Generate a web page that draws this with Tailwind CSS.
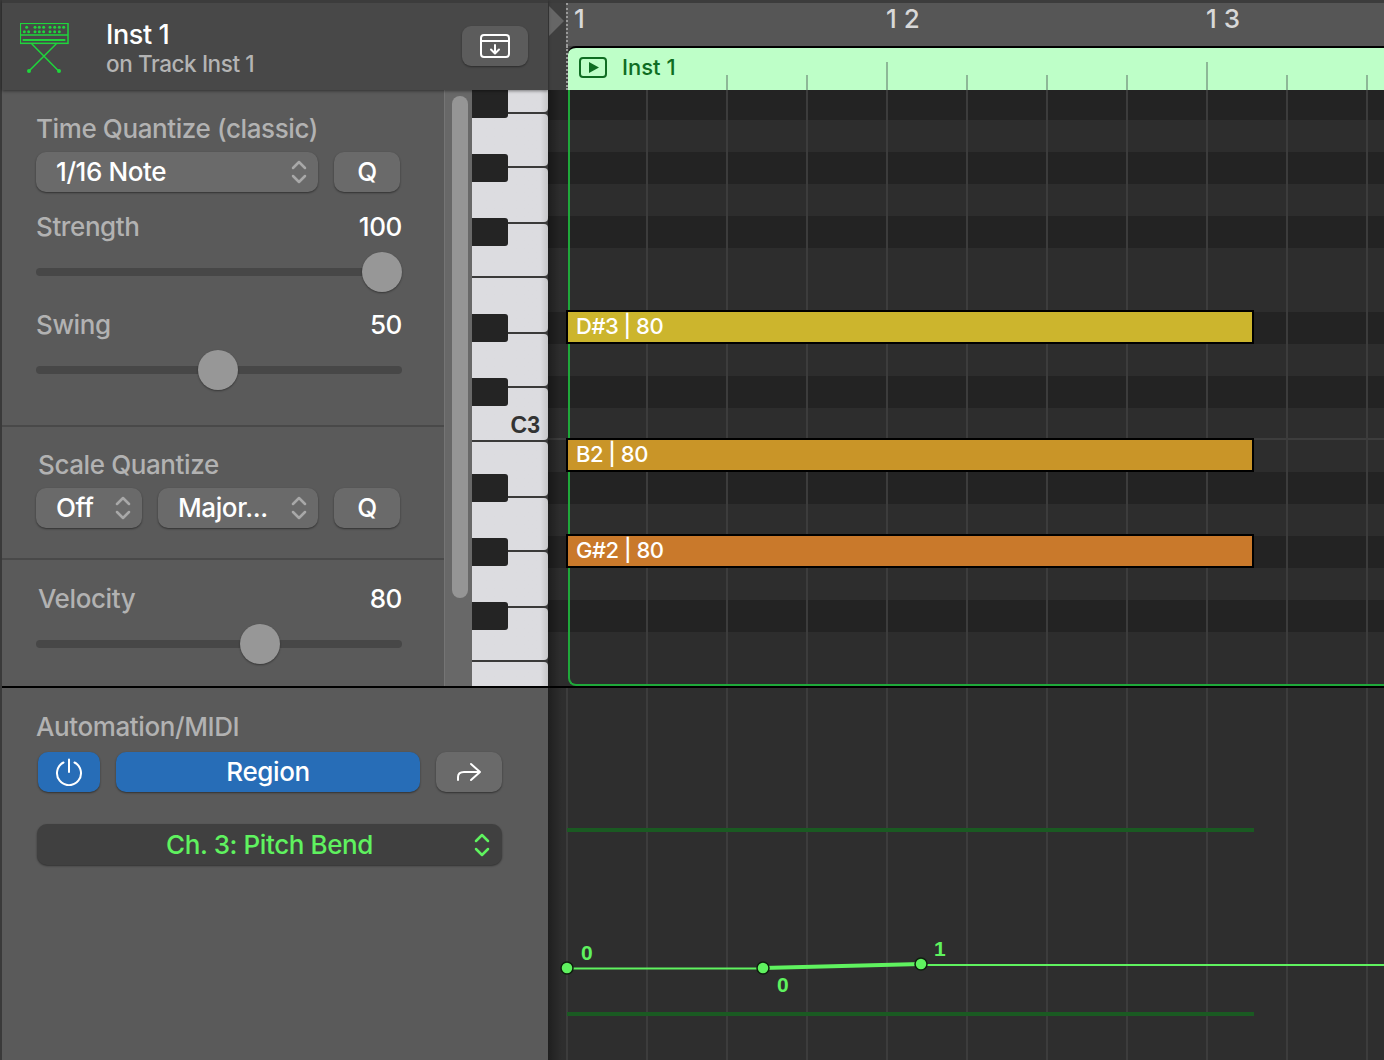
<!DOCTYPE html>
<html lang="en">
<head>
    <meta charset="UTF-8">
    <title>Piano Roll</title>
    <script src="https://cdn.jsdelivr.net/npm/@tailwindcss/browser@4"></script>
</head>
<body class="bg-[#2e2e2e]">
<div class="flex w-[1384px] h-[1060px] overflow-hidden font-['Inter','Noto_Sans',sans-serif] font-medium text-[26px] leading-[28px] tracking-[-0.4px] text-white">

    <!-- left column -->
    <div class="flex flex-col w-[548px] shrink-0 border-l-2 border-[#3a3a3a]">
        <!-- header -->
        <div class="flex items-center h-[90px] pt-[3px] pl-[18px] pr-[20px] bg-[#484848] border-t-[3px] border-[#3c3c3c] shadow-[0_1px_3px_#0007] relative z-20">
            <svg class="w-[50px] h-[50px] shrink-0" viewBox="60 72 150 150" fill="none" stroke="#1fd53c" stroke-width="4.5">
                <rect x="61" y="73" width="143" height="60"/>
                <path d="M61 108H204"/>
                <path d="M68 123H196" stroke-width="6"/>
                <path d="M95 134L176 216M169 134L87 216"/>
                <g fill="#1fd53c" stroke="none">
                    <circle cx="80" cy="85" r="4.5"/><circle cx="105" cy="85" r="4.5"/><circle cx="118" cy="85" r="4.5"/><circle cx="131" cy="85" r="4.5"/><circle cx="150" cy="85" r="4.5"/><circle cx="164" cy="85" r="4.5"/><circle cx="178" cy="85" r="4.5"/><circle cx="191" cy="85" r="4.5"/>
                    <circle cx="73" cy="98" r="4.5"/><circle cx="86" cy="98" r="4.5"/><circle cx="105" cy="98" r="4.5"/><circle cx="118" cy="98" r="4.5"/><circle cx="131" cy="98" r="4.5"/><circle cx="150" cy="98" r="4.5"/><circle cx="164" cy="98" r="4.5"/><circle cx="178" cy="98" r="4.5"/>
                    <circle cx="87" cy="216" r="6"/><circle cx="177" cy="216" r="6"/>
                </g>
            </svg>
            <div class="ml-[36px] flex flex-col flex-1 mt-[1px]">
                <span class="text-[27px] leading-[30px]">Inst 1</span>
                <span class="text-[#b4b4b4] text-[22.5px] leading-[28px]">on Track Inst 1</span>
            </div>
            <button class="flex items-center justify-center w-[66px] h-[40px] -mt-[4px] rounded-[9px] bg-[#5c5c5c] shadow-[0_1px_2px_#0006]">
                <svg class="w-[32px] h-[26px]" viewBox="0 0 32 26" fill="none" stroke="#fff" stroke-width="2" stroke-linecap="round" stroke-linejoin="round">
                    <rect x="2" y="2" width="28" height="22" rx="3"/>
                    <path d="M2 8H30M16 12V20M12 16.5L16 20.5L20 16.5"/>
                </svg>
            </button>
        </div>

        <!-- inspector + scrollbar + piano -->
        <div class="flex h-[596px] shrink-0">
            <div class="flex flex-col w-[442px] bg-[#5a5a5a] text-[#b2b2b2]">
                <section class="h-[337px] shrink-0 pt-[25px] pl-[34px] pr-[40px] border-b-2 border-[#494949]">
                    <div class="h-[28px]">Time Quantize (classic)</div>
                    <div class="flex gap-[16px] mt-[9px]">
                        <div class="flex items-center justify-between w-[282px] h-[40px] pl-[20px] pr-[11px] rounded-[10px] bg-[#6a6a6a] text-white shadow-[0_1px_2px_#0007]">
                            1/16 Note
                            <svg class="w-[16px] h-[26px]" viewBox="0 0 16 26" fill="none" stroke="#a8a8a8" stroke-width="2.5" stroke-linecap="round" stroke-linejoin="round"><path d="M2 9L8 3L14 9M2 17L8 23L14 17"/></svg>
                        </div>
                        <div class="flex items-center justify-center w-[66px] h-[40px] rounded-[10px] bg-[#6a6a6a] text-white shadow-[0_1px_2px_#0007]">Q</div>
                    </div>
                    <div class="flex justify-between h-[28px] mt-[21px] w-[366px]">Strength<span class="text-white">100</span></div>
                    <div class="relative flex items-center h-[40px] w-[366px] mt-[11px]">
                        <div class="w-full h-[8px] rounded-full bg-[#474747]"></div>
                        <div class="absolute left-[326px] w-[40px] h-[40px] rounded-full bg-[#979797] shadow-[0_1px_2px_#0006]"></div>
                    </div>
                    <div class="flex justify-between h-[28px] mt-[19px] w-[366px]">Swing<span class="text-white">50</span></div>
                    <div class="relative flex items-center h-[40px] w-[366px] mt-[11px]">
                        <div class="w-full h-[8px] rounded-full bg-[#474747]"></div>
                        <div class="absolute left-[162px] w-[40px] h-[40px] rounded-full bg-[#979797] shadow-[0_1px_2px_#0006]"></div>
                    </div>
                </section>
                <section class="h-[133px] shrink-0 pt-[24px] pl-[34px] pr-[40px] border-b-2 border-[#494949]">
                    <div class="h-[28px] pl-[2px]">Scale Quantize</div>
                    <div class="flex gap-[16px] mt-[9px]">
                        <div class="flex items-center justify-between w-[106px] h-[40px] pl-[20px] pr-[11px] rounded-[10px] bg-[#6a6a6a] text-white shadow-[0_1px_2px_#0007]">
                            Off
                            <svg class="w-[16px] h-[26px]" viewBox="0 0 16 26" fill="none" stroke="#a8a8a8" stroke-width="2.5" stroke-linecap="round" stroke-linejoin="round"><path d="M2 9L8 3L14 9M2 17L8 23L14 17"/></svg>
                        </div>
                        <div class="flex items-center justify-between w-[160px] h-[40px] pl-[20px] pr-[11px] rounded-[10px] bg-[#6a6a6a] text-white shadow-[0_1px_2px_#0007]">
                            Major...
                            <svg class="w-[16px] h-[26px]" viewBox="0 0 16 26" fill="none" stroke="#a8a8a8" stroke-width="2.5" stroke-linecap="round" stroke-linejoin="round"><path d="M2 9L8 3L14 9M2 17L8 23L14 17"/></svg>
                        </div>
                        <div class="flex items-center justify-center w-[66px] h-[40px] rounded-[10px] bg-[#6a6a6a] text-white shadow-[0_1px_2px_#0007]">Q</div>
                    </div>
                </section>
                <section class="flex-1 pt-[25px] pl-[34px] pr-[40px]">
                    <div class="flex justify-between h-[28px] pl-[2px] w-[366px]">Velocity<span class="text-white">80</span></div>
                    <div class="relative flex items-center h-[40px] w-[366px] mt-[11px]">
                        <div class="w-full h-[8px] rounded-full bg-[#474747]"></div>
                        <div class="absolute left-[204px] w-[40px] h-[40px] rounded-full bg-[#979797] shadow-[0_1px_2px_#0006]"></div>
                    </div>
                </section>
            </div>

            <!-- scrollbar -->
            <div class="w-[28px] pl-[7px] pt-[6px] bg-[#686868] border-l border-[#757575]">
                <div class="w-[16px] h-[502px] rounded-full bg-[#959595]"></div>
            </div>

            <!-- piano -->
            <div class="relative flex flex-col gap-[2px] w-[76px] bg-[#3a3a3a] overflow-hidden">
                <div class="h-[22px] shrink-0 bg-linear-to-r from-[#dcdce0] from-90% to-[#c6c6c8] rounded-br-[4px]"></div>
                <div class="h-[52px] shrink-0 bg-linear-to-r from-[#dcdce0] from-90% to-[#c6c6c8] rounded-r-[4px]"></div>
                <div class="h-[54px] shrink-0 bg-linear-to-r from-[#dcdce0] from-90% to-[#c6c6c8] rounded-r-[4px]"></div>
                <div class="h-[52px] shrink-0 bg-linear-to-r from-[#dcdce0] from-90% to-[#c6c6c8] rounded-r-[4px]"></div>
                <div class="h-[54px] shrink-0 bg-linear-to-r from-[#dcdce0] from-90% to-[#c6c6c8] rounded-r-[4px]"></div>
                <div class="h-[52px] shrink-0 bg-linear-to-r from-[#dcdce0] from-90% to-[#c6c6c8] rounded-r-[4px]"></div>
                <div class="flex items-end justify-end h-[52px] shrink-0 pr-[8px] pb-[2px] bg-linear-to-r from-[#dcdce0] from-90% to-[#c6c6c8] rounded-r-[4px] font-['Liberation_Sans',sans-serif] font-bold text-[23px] leading-[26px] tracking-normal text-[#333]">C3</div>
                <div class="h-[54px] shrink-0 bg-linear-to-r from-[#dcdce0] from-90% to-[#c6c6c8] rounded-r-[4px]"></div>
                <div class="h-[52px] shrink-0 bg-linear-to-r from-[#dcdce0] from-90% to-[#c6c6c8] rounded-r-[4px]"></div>
                <div class="h-[54px] shrink-0 bg-linear-to-r from-[#dcdce0] from-90% to-[#c6c6c8] rounded-r-[4px]"></div>
                <div class="h-[52px] shrink-0 bg-linear-to-r from-[#dcdce0] from-90% to-[#c6c6c8] rounded-r-[4px]"></div>
                <div class="h-[30px] shrink-0 bg-linear-to-r from-[#dcdce0] from-90% to-[#c6c6c8] rounded-tr-[4px]"></div>
                <div class="absolute left-0 top-0 w-[36px] h-[28px] rounded-br-[3px] bg-[#242424]"></div>
                <div class="absolute left-0 top-[64px] w-[36px] h-[28px] rounded-r-[3px] bg-[#242424]"></div>
                <div class="absolute left-0 top-[128px] w-[36px] h-[28px] rounded-r-[3px] bg-[#242424]"></div>
                <div class="absolute left-0 top-[224px] w-[36px] h-[28px] rounded-r-[3px] bg-[#242424]"></div>
                <div class="absolute left-0 top-[288px] w-[36px] h-[28px] rounded-r-[3px] bg-[#242424]"></div>
                <div class="absolute left-0 top-[384px] w-[36px] h-[28px] rounded-r-[3px] bg-[#242424]"></div>
                <div class="absolute left-0 top-[448px] w-[36px] h-[28px] rounded-r-[3px] bg-[#242424]"></div>
                <div class="absolute left-0 top-[512px] w-[36px] h-[28px] rounded-r-[3px] bg-[#242424]"></div>
            </div>
        </div>

        <!-- automation panel -->
        <div class="flex-1 border-t-2 border-black bg-[#5a5a5a] text-[#b2b2b2] pt-[25px] pl-[34px]">
            <div class="h-[28px]">Automation/MIDI</div>
            <div class="flex gap-[16px] mt-[11px] ml-[2px]">
                <div class="flex items-center justify-center w-[62px] h-[40px] rounded-[10px] bg-[#276db7] shadow-[0_1px_2px_#0007]">
                    <svg class="w-[28px] h-[28px]" viewBox="0 0 28 28" fill="none" stroke="#fff" stroke-width="2" stroke-linecap="round"><path d="M14 1.5V14M8.5 4.5A12 12 0 1 0 19.5 4.5"/></svg>
                </div>
                <div class="flex items-center justify-center w-[304px] h-[40px] rounded-[10px] bg-[#276db7] text-white shadow-[0_1px_2px_#0007]">Region</div>
                <div class="flex items-center justify-center w-[66px] h-[40px] rounded-[10px] bg-[#6a6a6a] shadow-[0_1px_2px_#0007]">
                    <svg class="w-[26px] h-[20px]" viewBox="0 0 26 20" fill="none" stroke="#fff" stroke-width="2" stroke-linecap="round" stroke-linejoin="round"><path d="M2 18V15Q2 10 8 10H24M15 2L24 10L15 18"/></svg>
                </div>
            </div>
            <div class="relative flex items-center justify-center w-[465px] h-[41px] mt-[32px] ml-[1px] rounded-[10px] bg-[#404040] text-[#5ff25f] shadow-[0_1px_2px_#0007]">
                Ch. 3: Pitch Bend
                <svg class="absolute right-[12px] w-[16px] h-[26px]" viewBox="0 0 16 26" fill="none" stroke="#5ff25f" stroke-width="2.5" stroke-linecap="round" stroke-linejoin="round"><path d="M2 9L8 3L14 9M2 17L8 23L14 17"/></svg>
            </div>
        </div>
    </div>

    <!-- right column -->
    <div class="flex flex-col flex-1 min-w-0">
        <!-- ruler -->
        <div class="relative flex h-[46px] shrink-0 border-t-[3px] border-[#3c3c3c] bg-[#3f3f3f]">
            <svg class="absolute left-0 top-[3px] w-[17px] h-[30px]" viewBox="0 0 17 30"><path d="M1 0L16 15L1 30Z" fill="#666"/></svg>
            <div class="ml-[18px] flex-1 flex bg-[#565656] border-l-2 border-dotted border-[#9a9a9a] text-[#d8d8d8] text-[26px] tracking-[7px] leading-[32px] pl-[6px]">
                <span class="w-[312px]">1</span>
                <span class="w-[320px]">12</span>
                <span>13</span>
            </div>
        </div>

        <!-- region header -->
        <div class="flex h-[44px] shrink-0 bg-[#3f3f3f]">
            <div class="w-[20px] shrink-0 border-r-2 border-dotted border-[#9a9a9a]"></div>
            <div class="relative flex-1 flex items-center pl-[11px] pb-[4px] border-t-2 border-black rounded-tl-[8px] bg-[#beffc8] text-[#0f6d22] text-[22px] tracking-normal overflow-hidden">
                <svg class="w-[28px] h-[21px] shrink-0" viewBox="0 0 28 21" fill="none" stroke="#0f6d22" stroke-width="2"><rect x="1" y="1" width="26" height="19" rx="3"/><path d="M10 5L20 10.5L10 16Z" fill="#0f6d22" stroke="none"/></svg>
                <span class="ml-[15px]">Inst 1</span>
                <div class="absolute inset-x-0 bottom-0 flex items-end pl-[158px]">
                    <div class="w-[80px] h-[15px] border-l-2 border-[#8db897]"></div>
                    <div class="w-[80px] h-[15px] border-l-2 border-[#8db897]"></div>
                    <div class="w-[80px] h-[28px] border-l-2 border-[#8db897]"></div>
                    <div class="w-[80px] h-[15px] border-l-2 border-[#8db897]"></div>
                    <div class="w-[80px] h-[15px] border-l-2 border-[#8db897]"></div>
                    <div class="w-[80px] h-[15px] border-l-2 border-[#8db897]"></div>
                    <div class="w-[80px] h-[28px] border-l-2 border-[#8db897]"></div>
                    <div class="w-[80px] h-[15px] border-l-2 border-[#8db897]"></div>
                    <div class="w-[17px] h-[15px] border-l-2 border-[#8db897]"></div>
                </div>
            </div>
        </div>

        <!-- note grid -->
        <div class="relative h-[596px] shrink-0 overflow-hidden">
            <div class="flex flex-col">
                <div class="h-[30px] bg-[#232323]"></div>
                <div class="h-[32px] bg-[#2d2d2d]"></div>
                <div class="h-[32px] bg-[#232323]"></div>
                <div class="h-[32px] bg-[#2d2d2d]"></div>
                <div class="h-[32px] bg-[#232323]"></div>
                <div class="h-[32px] bg-[#2d2d2d]"></div>
                <div class="h-[32px] bg-[#2d2d2d]"></div>
                <div class="h-[32px] bg-[#232323]"></div>
                <div class="h-[32px] bg-[#2d2d2d]"></div>
                <div class="h-[32px] bg-[#232323]"></div>
                <div class="h-[32px] bg-[#2d2d2d] border-b-2 border-[#3d3d3d]"></div>
                <div class="h-[32px] bg-[#2d2d2d]"></div>
                <div class="h-[32px] bg-[#232323]"></div>
                <div class="h-[32px] bg-[#2d2d2d]"></div>
                <div class="h-[32px] bg-[#232323]"></div>
                <div class="h-[32px] bg-[#2d2d2d]"></div>
                <div class="h-[32px] bg-[#232323]"></div>
                <div class="h-[54px] bg-[#2d2d2d]"></div>
            </div>
            <div class="absolute inset-y-0 left-0 w-[12px] bg-gradient-to-r from-[#0005] to-transparent"></div>
            <div class="absolute inset-0 flex pl-[98px]">
                <div class="w-[80px] border-l-2 border-[#3c3c3c]"></div>
                <div class="w-[80px] border-l-2 border-[#3c3c3c]"></div>
                <div class="w-[80px] border-l-2 border-[#3c3c3c]"></div>
                <div class="w-[80px] border-l-2 border-[#3c3c3c]"></div>
                <div class="w-[80px] border-l-2 border-[#3c3c3c]"></div>
                <div class="w-[80px] border-l-2 border-[#3c3c3c]"></div>
                <div class="w-[80px] border-l-2 border-[#3c3c3c]"></div>
                <div class="w-[80px] border-l-2 border-[#3c3c3c]"></div>
                <div class="w-[80px] border-l-2 border-[#3c3c3c]"></div>
                <div class="w-[17px] border-l-2 border-[#3c3c3c]"></div>
            </div>
            <div class="absolute left-[20px] right-0 top-0 bottom-0 border-l-2 border-b-2 border-[#1fa83a] rounded-bl-[8px]"></div>

            <div class="absolute left-[18px] top-[220px] w-[688px] h-[34px] flex items-center pl-[8px] pb-[2px] border-2 border-black bg-[#ccb52d] text-[22px] tracking-[-0.5px]">D#3 | 80</div>
            <div class="absolute left-[18px] top-[348px] w-[688px] h-[34px] flex items-center pl-[8px] pb-[2px] border-2 border-black bg-[#c99528] text-[22px] tracking-[-0.5px]">B2 | 80</div>
            <div class="absolute left-[18px] top-[444px] w-[688px] h-[34px] flex items-center pl-[8px] pb-[2px] border-2 border-black bg-[#c9792b] text-[22px] tracking-[-0.5px]">G#2 | 80</div>
        </div>

        <!-- automation lane -->
        <div class="relative flex-1 border-t-2 border-black bg-[#2e2e2e]">
            <div class="absolute inset-y-0 left-0 w-[14px] bg-gradient-to-r from-[#0005] to-transparent"></div>
            <div class="absolute inset-0 flex pl-[18px]">
                <div class="w-[80px] border-l-2 border-[#3c3c3c]"></div>
                <div class="w-[80px] border-l-2 border-[#3c3c3c]"></div>
                <div class="w-[80px] border-l-2 border-[#3c3c3c]"></div>
                <div class="w-[80px] border-l-2 border-[#3c3c3c]"></div>
                <div class="w-[80px] border-l-2 border-[#3c3c3c]"></div>
                <div class="w-[80px] border-l-2 border-[#3c3c3c]"></div>
                <div class="w-[80px] border-l-2 border-[#3c3c3c]"></div>
                <div class="w-[80px] border-l-2 border-[#3c3c3c]"></div>
                <div class="w-[80px] border-l-2 border-[#3c3c3c]"></div>
                <div class="w-[80px] border-l-2 border-[#3c3c3c]"></div>
                <div class="w-[17px] border-l-2 border-[#3c3c3c]"></div>
            </div>
            <svg class="absolute inset-0 w-[836px] h-[372px]" viewBox="548 688 836 372" fill="none">
                <path d="M567 830H1254M567 1014H1254" stroke="#1a5a22" stroke-width="4"/>
                <path d="M567 968.5H763M921 965H1384" stroke="#5ff25f" stroke-width="2"/>
                <path d="M763 968L921 964" stroke="#5ff25f" stroke-width="4"/>
                <g fill="#5ff25f" stroke="#0d1f0d" stroke-width="1.5">
                    <circle cx="567" cy="968" r="6"/>
                    <circle cx="763" cy="968" r="6"/>
                    <circle cx="921" cy="964" r="6"/>
                </g>
                <g fill="#5ff25f" font-family="Liberation Sans, sans-serif" font-weight="700" font-size="21" letter-spacing="0">
                    <text x="581" y="960">0</text>
                    <text x="777" y="992">0</text>
                    <text x="934" y="956">1</text>
                </g>
            </svg>
        </div>
    </div>
</div>
</body>
</html>
